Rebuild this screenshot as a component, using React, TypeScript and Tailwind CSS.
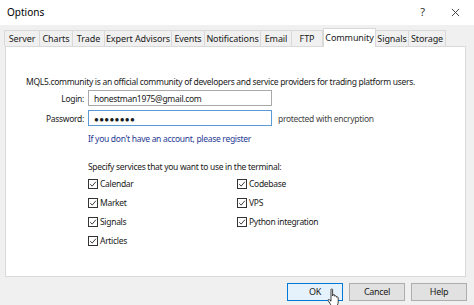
import React from "react"

const tabs = [
  { name: "Server", w: 36 },
  { name: "Charts", w: 33 },
  { name: "Trade", w: 32 },
  { name: "Expert Advisors", w: 67 },
  { name: "Events", w: 33 },
  { name: "Notifications", w: 56 },
  { name: "Email", w: 31 },
  { name: "FTP", w: 31 },
  { name: "Community", w: 53 },
  { name: "Signals", w: 33 },
  { name: "Storage", w: 37 },
]

function Check({ label }: { label: string }) {
  return (
    <div className="flex h-[19px] items-center gap-[2px]">
      <span className="flex h-[10px] w-[10px] items-center justify-center border border-[#333] bg-white">
        <svg viewBox="0 0 10 10" className="h-[8px] w-[8px]">
          <path d="M1.5 5.2 L4 7.6 L8.6 2.2" fill="none" stroke="#222" strokeWidth="1.1" />
        </svg>
      </span>
      <span>{label}</span>
    </div>
  )
}

export default function App() {
  return (
    <div
      className="relative flex h-[305px] w-[474px] flex-col overflow-hidden bg-[#f0f0f0] text-[8.5px] tracking-[-0.3px] text-[#1a1a1a]"
      style={{ fontFamily: '"Noto Sans", "Open Sans", sans-serif' }}
    >
      {/* title bar */}
      <div className="flex h-[25px] shrink-0 items-center justify-between bg-white pl-[7px] pr-[14px] text-[10px] tracking-normal text-black">
        <span>Options</span>
        <div className="flex items-center gap-[26px] text-[11px] text-[#333]">
          <span>?</span>
          <svg viewBox="0 0 10 10" className="h-[9px] w-[9px]">
            <path d="M1 1 L9 9 M9 1 L1 9" stroke="#333" strokeWidth="1" />
          </svg>
        </div>
      </div>

      {/* tabs */}
      <div className="flex h-[21px] shrink-0 items-end pl-[4px] text-[9px] tracking-[-0.1px]">
        {tabs.map((t) =>
          t.name === "Community" ? (
            <div
              key={t.name}
              style={{ width: t.w }}
              className="relative z-10 -mb-px flex h-[19px] items-start justify-center border border-b-0 border-[#d9d9d9] bg-white pt-[2px]"
            >
              {t.name}
            </div>
          ) : (
            <div
              key={t.name}
              style={{ width: t.w }}
              className="flex h-[16px] items-center justify-center border border-b-0 border-l-0 border-[#d9d9d9] bg-[#f0f0f0] first:border-l"
            >
              {t.name}
            </div>
          )
        )}
      </div>

      {/* panel */}
      <div className="ml-[5px] mr-[8px] h-[231px] shrink-0 border border-[#d9d9d9] bg-white leading-[13px]">
        <p className="pl-[20px] pt-[28px]">
          MQL5.community is an official community of developers and service providers for trading platform users.
        </p>

        <div className="mt-[2px] flex flex-col gap-[4px]">
          <div className="flex items-center">
            <span className="w-[78px] text-right">Login:</span>
            <div className="ml-[4px] flex h-[16px] w-[184px] items-center border border-[#a9a9a9] px-[5px]">
              honestman1975@gmail.com
            </div>
          </div>
          <div className="flex items-center">
            <span className="w-[78px] text-right">Password:</span>
            <div className="ml-[4px] flex h-[16px] w-[184px] items-center border border-[#5b9bd5] px-[5px] text-[8px] tracking-[0.3px]">
              ●●●●●●●●
            </div>
            <span className="ml-[6px] text-[#444]">protected with encryption</span>
          </div>
        </div>

        <p className="ml-[82px] mt-[6px] text-[#1f3a93]">If you don't have an account, please register</p>

        <p className="ml-[82px] mt-[15px]">Specify services that you want to use in the terminal:</p>

        <div className="ml-[82px] mt-[1px] grid w-[260px] grid-cols-[149px_1fr]">
          <Check label="Calendar" />
          <Check label="Codebase" />
          <Check label="Market" />
          <Check label="VPS" />
          <Check label="Signals" />
          <Check label="Python integration" />
          <Check label="Articles" />
        </div>
      </div>

      {/* footer */}
      <div className="flex flex-1 items-start justify-end gap-[6px] pr-[7px] pt-[6px] text-[9px]">
        <button className="flex h-[18px] w-[56px] items-center justify-center border border-[#0078d7] bg-[#e5f1fb]">OK</button>
        <button className="flex h-[18px] w-[56px] items-center justify-center border border-[#adadad] bg-[#e1e1e1]">Cancel</button>
        <button className="flex h-[18px] w-[56px] items-center justify-center border border-[#adadad] bg-[#e1e1e1]">Help</button>
      </div>

      {/* mouse cursor */}
      <svg viewBox="0 0 14 20" className="absolute left-[327px] top-[288px] h-[20px] w-[14px]">
        <path
          d="M4 1.5 C4 0.8 5.6 0.8 5.6 1.5 L5.6 8 L6 7 C6.4 6.2 7.6 6.4 7.6 7.3 L7.6 8.2 C8 7.5 9.4 7.6 9.4 8.6 L9.4 9.2 C9.8 8.6 11.2 8.8 11.2 9.8 L11.2 14 C11.2 16.5 10 18.5 8 18.5 L6.5 18.5 C5 18.5 4.2 17.5 3.4 16.2 L1.2 12.6 C0.7 11.8 1.8 11 2.6 11.8 L4 13.2 Z"
          fill="white"
          stroke="#111"
          strokeWidth="0.8"
        />
      </svg>
    </div>
  )
}
